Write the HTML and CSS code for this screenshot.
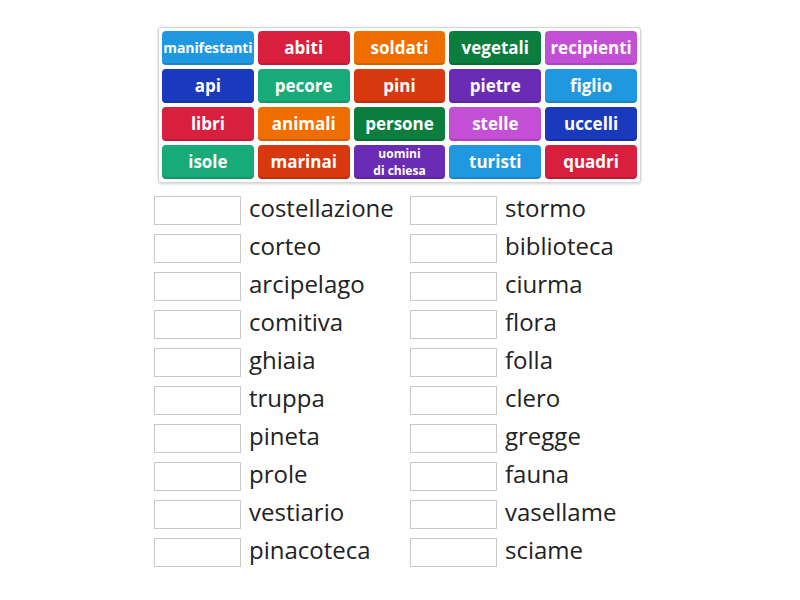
FILE: index.html
```html
<!DOCTYPE html>
<html lang="it">
<head>
<meta charset="utf-8">
<title>Abbinamento</title>
<link rel="stylesheet" href="styles.css">
</head>
<body>
<div class="page">
  <div class="bank">
    <div class="tile c-lblue fit">manifestanti</div>
    <div class="tile c-red">abiti</div>
    <div class="tile c-orange">soldati</div>
    <div class="tile c-green">vegetali</div>
    <div class="tile c-magenta">recipienti</div>
    <div class="tile c-dblue">api</div>
    <div class="tile c-teal">pecore</div>
    <div class="tile c-rorange">pini</div>
    <div class="tile c-purple">pietre</div>
    <div class="tile c-lblue">figlio</div>
    <div class="tile c-red">libri</div>
    <div class="tile c-orange">animali</div>
    <div class="tile c-green">persone</div>
    <div class="tile c-magenta">stelle</div>
    <div class="tile c-dblue">uccelli</div>
    <div class="tile c-teal">isole</div>
    <div class="tile c-rorange">marinai</div>
    <div class="tile c-purple small"><span class="ln">uomini</span><span class="ln">di chiesa</span></div>
    <div class="tile c-lblue">turisti</div>
    <div class="tile c-red">quadri</div>
  </div>

  <div class="targets">
    <div class="col">
      <div class="row"><span class="slot"></span><span class="word">costellazione</span></div>
      <div class="row"><span class="slot"></span><span class="word">corteo</span></div>
      <div class="row"><span class="slot"></span><span class="word">arcipelago</span></div>
      <div class="row"><span class="slot"></span><span class="word">comitiva</span></div>
      <div class="row"><span class="slot"></span><span class="word">ghiaia</span></div>
      <div class="row"><span class="slot"></span><span class="word">truppa</span></div>
      <div class="row"><span class="slot"></span><span class="word">pineta</span></div>
      <div class="row"><span class="slot"></span><span class="word">prole</span></div>
      <div class="row"><span class="slot"></span><span class="word">vestiario</span></div>
      <div class="row"><span class="slot"></span><span class="word">pinacoteca</span></div>
    </div>
    <div class="col">
      <div class="row"><span class="slot"></span><span class="word">stormo</span></div>
      <div class="row"><span class="slot"></span><span class="word">biblioteca</span></div>
      <div class="row"><span class="slot"></span><span class="word">ciurma</span></div>
      <div class="row"><span class="slot"></span><span class="word">flora</span></div>
      <div class="row"><span class="slot"></span><span class="word">folla</span></div>
      <div class="row"><span class="slot"></span><span class="word">clero</span></div>
      <div class="row"><span class="slot"></span><span class="word">gregge</span></div>
      <div class="row"><span class="slot"></span><span class="word">fauna</span></div>
      <div class="row"><span class="slot"></span><span class="word">vasellame</span></div>
      <div class="row"><span class="slot"></span><span class="word">sciame</span></div>
    </div>
  </div>
</div>
</body>
</html>
```

FILE: styles.css
```css
html, body {
  margin: 0;
  padding: 0;
  background: #ffffff;
}

body {
  font-family: "Open Sans", "Noto Sans", sans-serif;
  color: #222222;
}

.page {
  width: 800px;
  height: 600px;
  padding-top: 27px;
  box-sizing: border-box;
}

.bank {
  width: 483px;
  box-sizing: border-box;
  margin: 0 0 0 158px;
  padding: 3px;
  border: 1px solid #d4d4d4;
  border-radius: 3px;
  box-shadow: 0 1px 3px rgba(0, 0, 0, 0.18);
  display: grid;
  grid-template-columns: repeat(5, 1fr);
  grid-auto-rows: 34px;
  gap: 4px;
}

.tile {
  border-radius: 4px;
  color: #ffffff;
  font-weight: 700;
  font-size: 17px;
  line-height: 20px;
  display: flex;
  align-items: center;
  justify-content: center;
  text-align: center;
  white-space: nowrap;
  box-shadow: inset 0 -2px 0 rgba(0, 0, 0, 0.12);
}

.tile.fit {
  font-size: 14px;
  letter-spacing: -0.1px;
}

.tile.small {
  flex-direction: column;
  font-size: 12px;
  line-height: 17px;
  font-weight: 700;
}

.ln {
  display: block;
  height: 17px;
}

.c-lblue   { background: #1f98df; }
.c-red     { background: #d81f3d; }
.c-orange  { background: #f06e00; }
.c-green   { background: #0b7d3d; }
.c-magenta { background: #c34fd6; }
.c-dblue   { background: #1a39bd; }
.c-teal    { background: #19aa7a; }
.c-rorange { background: #d7380e; }
.c-purple  { background: #6a2cb4; }

.targets {
  display: flex;
  margin: 13px 0 0 154px;
  gap: 169px;
}

.col {
  display: flex;
  flex-direction: column;
  gap: 9px;
  width: 87px;
}

.row {
  display: flex;
  align-items: flex-start;
  gap: 8px;
  height: 29px;
}

.slot {
  flex: 0 0 auto;
  width: 87px;
  height: 29px;
  box-sizing: border-box;
  border: 1px solid #c8c8c8;
  background: #ffffff;
}

.word {
  font-size: 24px;
  line-height: 24px;
  white-space: nowrap;
  color: #222222;
}
```
